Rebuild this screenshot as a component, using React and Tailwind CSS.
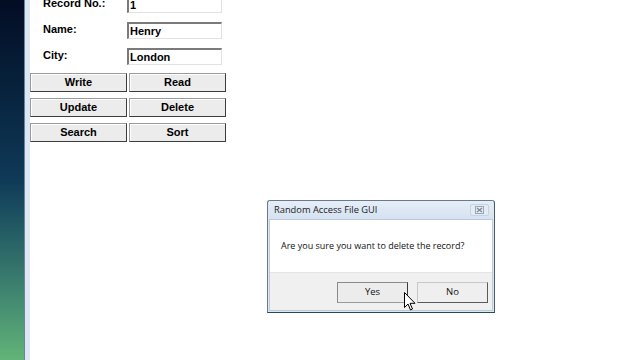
export default function App() {
  const font = { fontFamily: '"Liberation Sans", Arial, sans-serif' };
  const dfont = { fontFamily: '"Open Sans", "Liberation Sans", sans-serif' };
  const Btn = ({ children }) => (
    <div className="w-[97px] h-[19px] flex items-center justify-center bg-[#ececec] border border-[#9a9a9a] border-b-[#3c3c3c] border-r-[#3c3c3c] shadow-[inset_1px_1px_0_#ffffff] text-[11px] font-bold text-black">
      {children}
    </div>
  );
  const Field = ({ value, h = "h-[17px]" }) => (
    <div className={`w-[95px] ${h} bg-white border-t-2 border-l-2 border-t-[#7a7a7a] border-l-[#7a7a7a] border-b border-r border-b-[#e2e2e2] border-r-[#e2e2e2] flex items-center pl-[1px] text-[11px] font-bold text-black`}>
      {value}
    </div>
  );
  return (
    <div className="w-[640px] h-[360px] flex relative overflow-hidden bg-white" style={font}>
      <div className="w-[24px] h-full bg-gradient-to-b from-[#030d24] via-[#0f3a58] to-[#62b478]" />
      <div className="w-[1px] h-full bg-[#6f8296]" />
      <div className="w-[5px] h-full bg-[#dbe7f4]" />
      <div className="flex-1 h-full flex flex-col">
        <div className="flex flex-col mt-[-4px]">
          <div className="flex h-[26px]">
            <div className="w-[97px] pl-[13px] text-[11px] font-bold text-black leading-none pt-[2px]">Record No.:</div>
            <Field value="1" h="h-[17px]" />
          </div>
          <div className="flex h-[26px]">
            <div className="w-[97px] pl-[13px] text-[11px] font-bold text-black leading-none pt-[2px]">Name:</div>
            <Field value="Henry" />
          </div>
          <div className="flex h-[26px]">
            <div className="w-[97px] pl-[13px] text-[11px] font-bold text-black leading-none pt-[2px]">City:</div>
            <Field value="London" />
          </div>
        </div>
        <div className="grid grid-cols-[97px_97px] gap-x-[2px] gap-y-[6px] mt-[-1px]">
          <Btn>Write</Btn>
          <Btn>Read</Btn>
          <Btn>Update</Btn>
          <Btn>Delete</Btn>
          <Btn>Search</Btn>
          <Btn>Sort</Btn>
        </div>
      </div>

      <div className="absolute left-[267px] top-[200px] w-[228px] h-[113px] flex flex-col bg-[#dce7f3] border border-[#6b7a88] border-b-[#274a5a] border-r-[#4a5a68] rounded-t-[3px] p-[1px] pt-0">
        <div className="h-[18px] flex items-center justify-between pl-[5px] pr-[4px] bg-gradient-to-b from-[#e6eef8] to-[#d5e2f1]">
          <span className="text-[9.3px] text-[#1a1a1a]" style={dfont}>Random Access File GUI</span>
          <div className="w-[19px] h-[12px] flex items-center justify-center rounded-[2px] border border-[#c7d3e0] bg-[#e3ebf5]">
            <svg width="9" height="8" viewBox="0 0 9 8">
              <rect x="0.5" y="0.5" width="8" height="7" fill="none" stroke="#9aa6b2" />
              <path d="M2 2 L7 6 M7 2 L2 6" stroke="#7a8694" strokeWidth="1.2" />
            </svg>
          </div>
        </div>
        <div className="flex-1 flex flex-col bg-white border border-[#bcc9d6]">
          <div className="h-[52px] flex items-center pl-[11px] pb-[1px] text-[9px] text-[#111]" style={dfont}>
            Are you sure you want to delete the record?
          </div>
          <div className="flex-1 bg-[#f0f0f0] border-t border-[#e4e4e4] flex items-start justify-end gap-[9px] pt-[9px] pr-[4px]">
            <div className="w-[71px] h-[21px] flex items-center justify-center bg-[#ececec] border border-[#8a8a8a] border-r-[#3a3a3a] border-b-[#9a9a9a] text-[9.5px] text-[#111]" style={dfont}>Yes</div>
            <div className="w-[71px] h-[21px] flex items-center justify-center bg-[#efefef] border border-[#c8c8c8] border-r-[#5a5a5a] border-b-[#5a5a5a] text-[9.5px] text-[#111]" style={dfont}>No</div>
          </div>
        </div>
      </div>

      <svg className="absolute left-[404px] top-[292px]" width="12" height="19" viewBox="0 0 12 19">
        <path d="M0.5 0.5 L0.5 15.5 L4 12 L6.5 18 L8.5 17 L6 11.3 L11 11.3 Z" fill="#ffffff" stroke="#000000" strokeWidth="1" strokeLinejoin="round" />
      </svg>
    </div>
  );
}
